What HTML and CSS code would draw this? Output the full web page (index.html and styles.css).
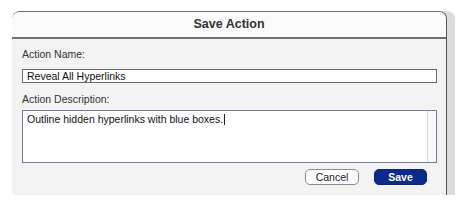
FILE: index.html
```html
<!DOCTYPE html>
<html lang="en">
<head>
    <meta charset="UTF-8">
    <title>Save Action</title>
    <link rel="stylesheet" href="styles.css">
</head>
<body>

<div class="dialog">
    <div class="title-bar">Save Action</div>

    <div class="content">
        <div class="label">Action Name:</div>
        <div class="name-field">Reveal All Hyperlinks</div>

        <div class="label">Action Description:</div>
        <div class="desc-field">
            <div class="desc-text">Outline hidden hyperlinks with blue boxes.<span class="caret"></span></div>
            <div class="scroll-track"></div>
        </div>

        <div class="buttons">
            <button class="btn btn-cancel">Cancel</button>
            <button class="btn btn-save">Save</button>
        </div>
    </div>
</div>

</body>
</html>
```

FILE: styles.css
```css
body {
    margin: 0;
    background-color: #ffffff;
    font-family: "Liberation Sans", Arial, sans-serif;
    color: #2a2a2a;
}

.dialog {
    width: 434px;
    height: 183px;
    margin: 11px 0 0 12px;
    background-color: #f3f3f3;
    border-top: 1px solid #6e6e6e;
    border-right: 1px solid #555555;
    border-radius: 8px 8px 0 0;
    box-shadow: 8px 0 0 #dcdcdc;
    overflow: hidden;
}

.title-bar {
    height: 25px;
    line-height: 25px;
    text-align: center;
    background-color: #fbfbfb;
    border-bottom: 2px solid #707070;
    font-size: 12.5px;
    font-weight: bold;
    color: #333333;
}

.content {
    padding: 8px 9px 0 10px;
}

.label {
    font-size: 10.5px;
    line-height: 14px;
    color: #333333;
}

.name-field {
    height: 12px;
    margin: 8px 0 9px;
    padding: 0 4px;
    border: 1px solid #6a6a6a;
    background-color: #ffffff;
    font-size: 10.5px;
    line-height: 12px;
    color: #111111;
}

.desc-field {
    display: flex;
    height: 51px;
    margin-top: 4px;
    border: 1px solid #7479a6;
    background-color: #ffffff;
}

.desc-text {
    flex: 1;
    padding: 2px 4px;
    font-size: 10.5px;
    line-height: 12px;
    color: #111111;
}

.caret {
    display: inline-block;
    width: 1px;
    height: 11px;
    margin-left: 1px;
    vertical-align: -2px;
    background-color: #222222;
}

.scroll-track {
    width: 8px;
    border-left: 1px solid #d8d8d8;
    background-color: #f8f8f8;
}

.buttons {
    display: flex;
    justify-content: flex-end;
    gap: 15px;
    margin-top: 6px;
    padding-right: 10px;
}

.btn {
    height: 16px;
    padding: 0;
    border-radius: 5px;
    font-family: "Liberation Sans", Arial, sans-serif;
    font-size: 10.5px;
    line-height: 14px;
}

.btn-cancel {
    width: 54px;
    border: 1px solid #8a8a8a;
    background-color: #ffffff;
    color: #222222;
}

.btn-save {
    width: 53px;
    border: 1px solid #0a2684;
    background-color: #0b2a8e;
    color: #ffffff;
    font-weight: bold;
}
```
